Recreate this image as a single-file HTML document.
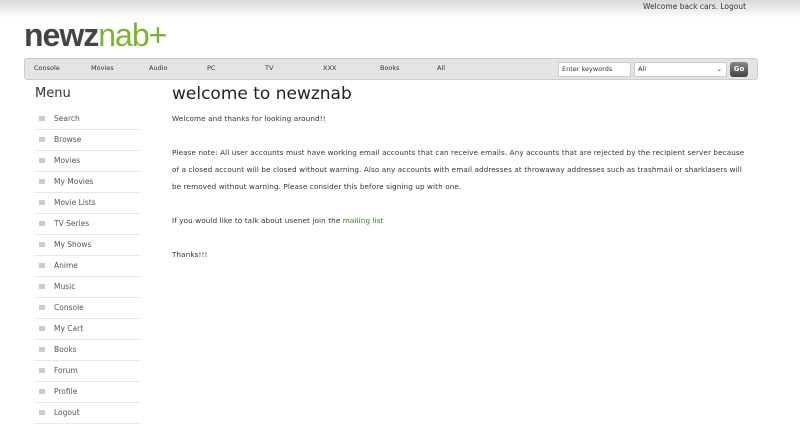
<!DOCTYPE html><html><head><style>
body{margin:0;width:800px;height:419px;overflow:hidden;background:#fff;font-family:"DejaVu Sans",sans-serif;color:#333;position:relative}
.top{position:absolute;left:0;top:0;width:800px;height:18px;background:linear-gradient(#d8d8d8,#fff)}
.top span{position:absolute;left:643px;top:2px;font-size:7.5px;color:#333}
.logo{position:absolute;left:24px;top:17px;font-size:32px;font-weight:bold;letter-spacing:-1px;color:#444;font-family:"Liberation Sans",sans-serif}
.logo b{color:#7ab62a;font-weight:normal}
.nav{position:absolute;left:24px;top:58px;width:732px;height:20px;background:#e4e4e4;border:1px solid #ccc;border-radius:3px}
.nav a{position:absolute;top:5px;font-size:6.5px;color:#333}
.inp{position:absolute;top:3px;height:13px;background:#fff;border:1px solid #ccc;font-size:6.5px;padding-left:3px;line-height:13px}
.go{position:absolute;left:705px;top:3px;width:18px;height:15px;background:linear-gradient(#888,#444);border-radius:3px;color:#fff;font-size:7px;text-align:center;line-height:15px;font-weight:bold}
.menuh{position:absolute;left:35px;top:86px;font-size:13px;color:#333}
.mi{position:absolute;left:34px;width:106px;height:20px;border-bottom:1px solid #e8e8e8;font-size:7.5px;color:#555}
.mi i{position:absolute;left:5px;top:7px;width:6px;height:5px;background:#ccc}
.mi span{position:absolute;left:20px;top:5px}
h1{position:absolute;left:172px;top:84px;margin:0;font-weight:normal;font-size:17px;color:#222}
.c{position:absolute;left:172px;font-size:7.2px;color:#333;width:596px;line-height:17px;letter-spacing:0.12px}
.c a{color:#3a7a1a}
</style></head><body>
<div class="top"><span>Welcome back cars. Logout</span></div>
<div class="logo">newz<b>nab+</b></div>
<div class="nav">
<a style="left:9px">Console</a><a style="left:66px">Movies</a><a style="left:124px">Audio</a><a style="left:182px">PC</a><a style="left:240px">TV</a><a style="left:298px">XXX</a><a style="left:355px">Books</a><a style="left:412px">All</a>
<div class="inp" style="left:533px;width:68px">Enter keywords</div>
<div class="inp" style="left:609px;width:88px">All <span style="float:right;padding-right:4px">⌄</span></div>
<div class="go">Go</div></div>
<div class="menuh">Menu</div>
<div class="mi" style="top:109px"><i></i><span>Search</span></div>
<div class="mi" style="top:130px"><i></i><span>Browse</span></div>
<div class="mi" style="top:151px"><i></i><span>Movies</span></div>
<div class="mi" style="top:172px"><i></i><span>My Movies</span></div>
<div class="mi" style="top:193px"><i></i><span>Movie Lists</span></div>
<div class="mi" style="top:214px"><i></i><span>TV Series</span></div>
<div class="mi" style="top:235px"><i></i><span>My Shows</span></div>
<div class="mi" style="top:256px"><i></i><span>Anime</span></div>
<div class="mi" style="top:277px"><i></i><span>Music</span></div>
<div class="mi" style="top:298px"><i></i><span>Console</span></div>
<div class="mi" style="top:319px"><i></i><span>My Cart</span></div>
<div class="mi" style="top:340px"><i></i><span>Books</span></div>
<div class="mi" style="top:361px"><i></i><span>Forum</span></div>
<div class="mi" style="top:382px"><i></i><span>Profile</span></div>
<div class="mi" style="top:403px"><i></i><span>Logout</span></div>
<h1>welcome to newznab</h1>
<div class="c" style="top:110px">Welcome and thanks for looking around!!</div>
<div class="c" style="top:144px">Please note: All user accounts must have working email accounts that can receive emails. Any accounts that are rejected by the recipient server because<br>of a closed account will be closed without warning. Also any accounts with email addresses at throwaway addresses such as trashmail or sharklasers will<br>be removed without warning. Please consider this before signing up with one.</div>
<div class="c" style="top:212px">If you would like to talk about usenet join the <a>mailing list</a></div>
<div class="c" style="top:246px">Thanks!!!</div>
</body></html>
